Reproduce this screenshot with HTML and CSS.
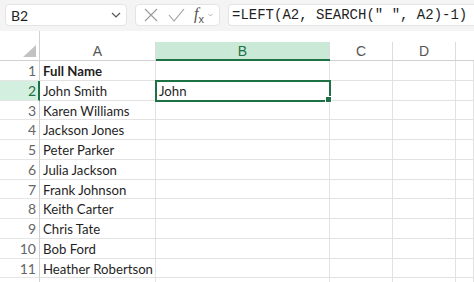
FILE: index.html
```html
<!DOCTYPE html>
<html lang="en">
<head>
    <meta charset="UTF-8">
    <title>Sheet</title>
    <link rel="stylesheet" href="styles.css">
</head>
<body>
    <div class="toolbar">
        <div class="name-box">
            <span>B2</span>
            <svg class="chev" width="10" height="6" viewBox="0 0 10 6"><path d="M1 1l4 4 4-4" fill="none" stroke="#555" stroke-width="1.2"/></svg>
        </div>
        <div class="fx-tools">
            <svg width="14" height="14" viewBox="0 0 14 14"><path d="M1 1l12 12M13 1L1 13" stroke="#9a9a9a" stroke-width="1.1"/></svg>
            <svg width="17" height="14" viewBox="0 0 17 14"><path d="M1 7l5 6L16 1" fill="none" stroke="#9a9a9a" stroke-width="1.1"/></svg>
            <span class="fx">f<sub>x</sub></span>
            <svg width="5" height="4" viewBox="0 0 5 4"><path d="M0.5 1l2 2 2-2" fill="none" stroke="#aaa" stroke-width="0.9"/></svg>
        </div>
        <div class="formula">=LEFT(A2, SEARCH(" ", A2)-1)</div>
    </div>

    <div class="sheet">
        <div class="corner"><span class="tri"></span></div>
        <div class="col-head"><span>A</span></div>
        <div class="col-head active"><span>B</span></div>
        <div class="col-head"><span>C</span></div>
        <div class="col-head"><span>D</span></div>
        <div class="col-head last"><span></span></div>

        <div class="row-head">1</div><div class="cell bold">Full Name</div><div class="cell"></div><div class="cell"></div><div class="cell"></div><div class="cell"></div>
        <div class="row-head active">2</div><div class="cell">John Smith</div><div class="cell selected">John</div><div class="cell"></div><div class="cell"></div><div class="cell"></div>
        <div class="row-head">3</div><div class="cell">Karen Williams</div><div class="cell"></div><div class="cell"></div><div class="cell"></div><div class="cell"></div>
        <div class="row-head">4</div><div class="cell">Jackson Jones</div><div class="cell"></div><div class="cell"></div><div class="cell"></div><div class="cell"></div>
        <div class="row-head">5</div><div class="cell">Peter Parker</div><div class="cell"></div><div class="cell"></div><div class="cell"></div><div class="cell"></div>
        <div class="row-head">6</div><div class="cell">Julia Jackson</div><div class="cell"></div><div class="cell"></div><div class="cell"></div><div class="cell"></div>
        <div class="row-head">7</div><div class="cell">Frank Johnson</div><div class="cell"></div><div class="cell"></div><div class="cell"></div><div class="cell"></div>
        <div class="row-head">8</div><div class="cell">Keith Carter</div><div class="cell"></div><div class="cell"></div><div class="cell"></div><div class="cell"></div>
        <div class="row-head">9</div><div class="cell">Chris Tate</div><div class="cell"></div><div class="cell"></div><div class="cell"></div><div class="cell"></div>
        <div class="row-head">10</div><div class="cell">Bob Ford</div><div class="cell"></div><div class="cell"></div><div class="cell"></div><div class="cell"></div>
        <div class="row-head">11</div><div class="cell">Heather Robertson</div><div class="cell"></div><div class="cell"></div><div class="cell"></div><div class="cell"></div>
        <div class="row-head"></div><div class="cell"></div><div class="cell"></div><div class="cell"></div><div class="cell"></div><div class="cell"></div>
    </div>
</body>
</html>
```

FILE: styles.css
```css
* {
    box-sizing: border-box;
}

body {
    margin: 0;
    width: 474px;
    height: 282px;
    overflow: hidden;
    background: #fff;
    font-family: Lato, "Liberation Sans", sans-serif;
    color: #1f1f1f;
}

.toolbar {
    height: 31px;
    background: #f4f4f4;
    display: flex;
    align-items: center;
    padding: 0 0 1px 5px;
    gap: 8px;
}

.name-box,
.fx-tools,
.formula {
    height: 22px;
    background: #fff;
    border: 1px solid #e4e4e4;
    border-radius: 4px;
    display: flex;
    align-items: center;
}

.name-box {
    width: 122px;
    padding: 0 5px 0 5px;
    justify-content: space-between;
    font-size: 14px;
}

.fx-tools {
    width: 85px;
    padding-left: 8px;
    gap: 10px;
}

.fx {
    font-family: "Liberation Serif", serif;
    font-style: italic;
    font-size: 16px;
    color: #555;
    margin-left: -1px;
    margin-right: -6px;
}

.fx sub {
    font-size: 11px;
    font-style: normal;
    font-family: "Liberation Sans", sans-serif;
}

.formula {
    flex: 1;
    border-right: none;
    border-radius: 4px 0 0 4px;
    padding-left: 3px;
    font-family: "Liberation Mono", monospace;
    font-size: 14px;
    white-space: nowrap;
}

.sheet {
    display: grid;
    grid-template-columns: 40px 116px 174px 63px 63px 1fr;
    grid-template-rows: 30px repeat(12, 19.75px);
    font-size: 13.2px;
}

.corner {
    border-right: 1px solid #d0d0d0;
    border-bottom: 1px solid #d0d0d0;
    position: relative;
}

.tri {
    position: absolute;
    right: 3px;
    bottom: 3px;
    width: 0;
    height: 0;
    border-left: 13px solid transparent;
    border-bottom: 12px solid #c2c2c2;
}

.col-head {
    border-bottom: 1px solid #d0d0d0;
    display: flex;
    align-items: flex-end;
}

.col-head span {
    flex: 1;
    height: 18px;
    line-height: 18px;
    text-align: center;
    color: #555;
    font-family: "Liberation Sans", sans-serif;
    font-size: 14px;
    border-right: 1px solid #dcdcdc;
}

.col-head.last span {
    border-right: none;
}

.col-head.active {
    border-bottom: 2px solid #1e7145;
}

.col-head.active span {
    background: #caead7;
    color: #1e7145;
    height: 17px;
    line-height: 19px;
}

.row-head {
    border-right: 1px solid #d0d0d0;
    border-bottom: 1px solid #e6e6e6;
    text-align: right;
    padding-right: 3px;
    color: #666;
    line-height: 20px;
    font-size: 14px;
}

.row-head.active {
    background: #d3efdf;
    color: #1e7145;
    border-right: 2px solid #1e7145;
    padding-right: 2px;
}

.cell {
    border-right: 1px solid #e2e2e2;
    border-bottom: 1px solid #e2e2e2;
    padding-left: 3px;
    line-height: 20px;
    white-space: nowrap;
}

.cell.bold {
    font-weight: bold;
}

.cell.selected {
    position: relative;
    outline: 2px solid #1e7145;
    outline-offset: -1px;
    padding-left: 3px;
}

.cell.selected::after {
    content: '';
    position: absolute;
    right: -3px;
    bottom: -3px;
    width: 5px;
    height: 5px;
    background: #1e7145;
    border: 1px solid #fff;
}
```
